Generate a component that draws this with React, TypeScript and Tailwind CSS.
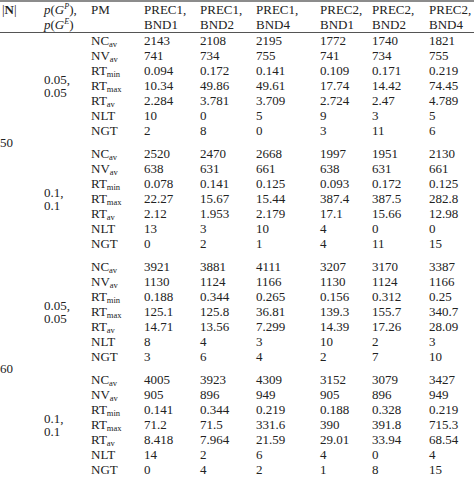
import React from "react";

type Group = { n?: string; p: string; rows: string[][] };

const labels: { base: string; sub?: string }[] = [
  { base: "NC", sub: "av" },
  { base: "NV", sub: "av" },
  { base: "RT", sub: "min" },
  { base: "RT", sub: "max" },
  { base: "RT", sub: "av" },
  { base: "NLT" },
  { base: "NGT" },
];

const groups: Group[] = [
  {
    n: "50",
    p: "0.05",
    rows: [
      ["2143", "2108", "2195", "1772", "1740", "1821"],
      ["741", "734", "755", "741", "734", "755"],
      ["0.094", "0.172", "0.141", "0.109", "0.171", "0.219"],
      ["10.34", "49.86", "49.61", "17.74", "14.42", "74.45"],
      ["2.284", "3.781", "3.709", "2.724", "2.47", "4.789"],
      ["10", "0", "5", "9", "3", "5"],
      ["2", "8", "0", "3", "11", "6"],
    ],
  },
  {
    p: "0.1",
    rows: [
      ["2520", "2470", "2668", "1997", "1951", "2130"],
      ["638", "631", "661", "638", "631", "661"],
      ["0.078", "0.141", "0.125", "0.093", "0.172", "0.125"],
      ["22.27", "15.67", "15.44", "387.4", "387.5", "282.8"],
      ["2.12", "1.953", "2.179", "17.1", "15.66", "12.98"],
      ["13", "3", "10", "4", "0", "0"],
      ["0", "2", "1", "4", "11", "15"],
    ],
  },
  {
    n: "60",
    p: "0.05",
    rows: [
      ["3921", "3881", "4111", "3207", "3170", "3387"],
      ["1130", "1124", "1166", "1130", "1124", "1166"],
      ["0.188", "0.344", "0.265", "0.156", "0.312", "0.25"],
      ["125.1", "125.8", "36.81", "139.3", "155.7", "340.7"],
      ["14.71", "13.56", "7.299", "14.39", "17.26", "28.09"],
      ["8", "4", "3", "10", "2", "3"],
      ["3", "6", "4", "2", "7", "10"],
    ],
  },
  {
    p: "0.1",
    rows: [
      ["4005", "3923", "4309", "3152", "3079", "3427"],
      ["905", "896", "949", "905", "896", "949"],
      ["0.141", "0.344", "0.219", "0.188", "0.328", "0.219"],
      ["71.2", "71.5", "331.6", "390", "391.8", "715.3"],
      ["8.418", "7.964", "21.59", "29.01", "33.94", "68.54"],
      ["14", "2", "6", "4", "0", "4"],
      ["0", "4", "2", "1", "8", "15"],
    ],
  },
];

const widths = [44, 47, 53, 56, 56, 64, 52, 57, 45];
const heads = [
  ["PREC1,", "BND1"],
  ["PREC1,", "BND2"],
  ["PREC1,", "BND4"],
  ["PREC2,", "BND1"],
  ["PREC2,", "BND2"],
  ["PREC2,", "BND4"],
];

function Label({ base, sub }: { base: string; sub?: string }) {
  return (
    <span>
      {base}
      {sub && <span className="relative top-[2px] text-[8.5px] leading-none">{sub}</span>}
    </span>
  );
}

function Sup({ c }: { c: string }) {
  return <span className="relative -top-[5px] text-[8px] leading-none italic">{c}</span>;
}

export default function App() {
  return (
    <div className="w-[474px] h-[479px] overflow-hidden bg-white text-[#222] text-[13px] font-['Liberation_Serif','Times_New_Roman',serif]">
      <table className="table-fixed border-collapse w-[474px]">
        <colgroup>
          {widths.map((w, i) => (
            <col key={i} style={{ width: w }} />
          ))}
        </colgroup>
        <thead>
          <tr className="border-t-[2px] border-t-[#8c8c8c] border-b border-b-[#555]">
            <th className="p-0 pl-[2px] h-[30px] text-left align-top font-normal leading-[15px]">
              |<span className="font-bold">N</span>|
            </th>
            <th className="p-0 text-left align-top font-normal leading-[15px]">
              <div>
                <i>p</i>(<i>G</i>
                <Sup c="P" />
                ),
              </div>
              <div>
                <i>p</i>(<i>G</i>
                <Sup c="E" />)
              </div>
            </th>
            <th className="p-0 text-left align-top font-normal leading-[15px]">PM</th>
            {heads.map((h, i) => (
              <th key={i} className="p-0 text-left align-top font-normal leading-[15px]">
                <div>{h[0]}</div>
                <div>{h[1]}</div>
              </th>
            ))}
          </tr>
        </thead>
        <tbody>
          {groups.map((g, gi) =>
            g.rows.map((r, ri) => {
              const pad = gi > 0 && ri === 0 ? "pt-[8px]" : "";
              return (
                <tr key={`${gi}-${ri}`}>
                  {ri === 0 && g.n && (
                    <td rowSpan={14} className={`p-0 ${pad} align-middle text-left leading-[15px]`}>
                      {g.n}
                    </td>
                  )}
                  {ri === 0 && (
                    <td rowSpan={7} className={`p-0 ${pad} align-middle text-left leading-[13px]`}>
                      <div>{g.p},</div>
                      <div>{g.p}</div>
                    </td>
                  )}
                  <td className={`p-0 ${pad} leading-[15px] text-left whitespace-nowrap`}>
                    <Label {...labels[ri]} />
                  </td>
                  {r.map((v, ci) => (
                    <td key={ci} className={`p-0 ${pad} leading-[15px] text-left`}>
                      {v}
                    </td>
                  ))}
                </tr>
              );
            })
          )}
        </tbody>
      </table>
    </div>
  );
}
